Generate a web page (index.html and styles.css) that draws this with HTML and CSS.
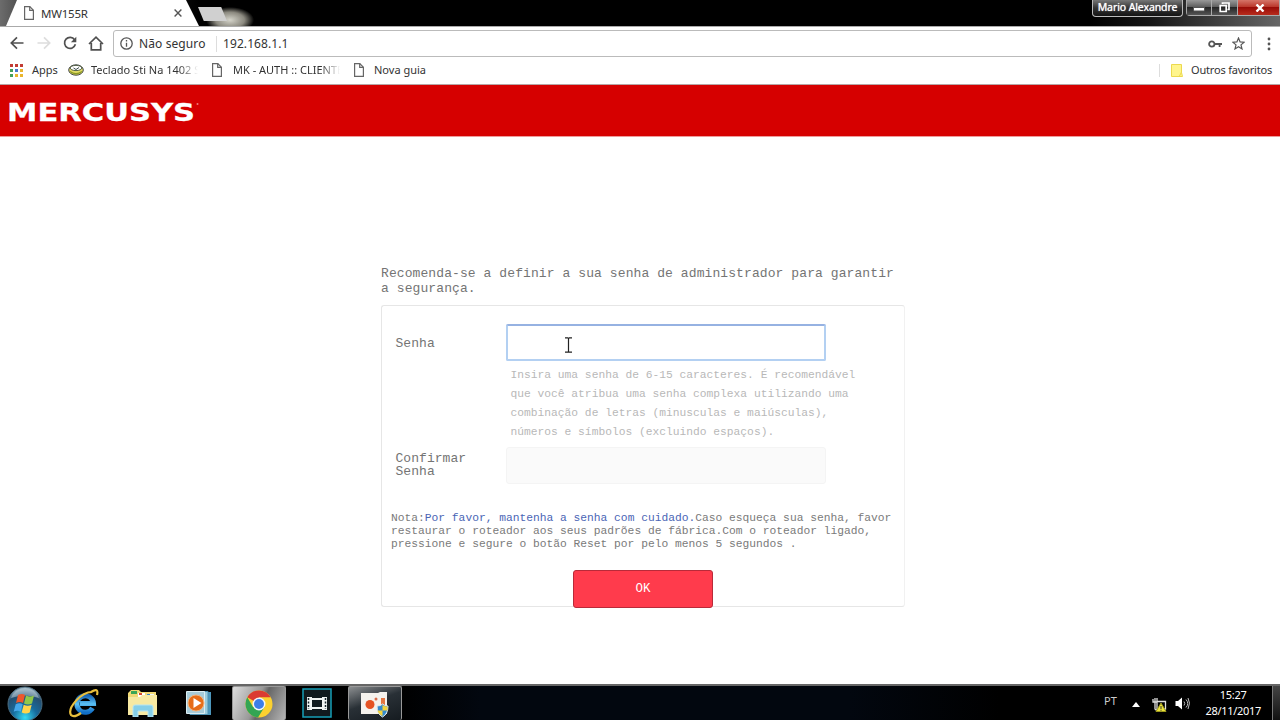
FILE: index.html
```html
<!DOCTYPE html>
<html lang="pt">
<head>
<meta charset="utf-8">
<title>MW155R</title>
<link rel="stylesheet" href="styles.css">
</head>
<body>
<div class="screen">
  <header class="titlebar">
    <div class="tab">
      <svg class="doc" width="10" height="14" viewBox="0 0 10 14"><path d="M.6.6h5.2l3.6 3.7v9H.6z"/><path d="M5.7.6v3.8h3.7"/></svg>
      <span class="tab-title">MW155R</span>
      <svg class="close" width="8" height="8" viewBox="0 0 8 8"><path d="M.6.6l6.8 6.8M7.4.6L.6 7.4"/></svg>
    </div>
    <div class="new-tab"><i></i></div>
    <div class="user">Mario Alexandre</div>
    <div class="window-buttons">
      <span class="wb min"><svg width="12" height="5" viewBox="0 0 12 5"><path d="M.5.5h11v3.5H.5z" fill="#fff" stroke="#555"/></svg></span>
      <span class="wb max"><svg width="11" height="11" viewBox="0 0 11 11"><path d="M3.5 2V1h6.5v6.5H8.5M1.2 3.5h6v6h-6z" fill="none" stroke="#fff" stroke-width="1.7"/></svg></span>
      <span class="wb exit"><svg width="10" height="8" viewBox="0 0 10 8"><path d="M1.5.5l7 7m0-7l-7 7" stroke="#fff" stroke-width="2.4"/></svg></span>
    </div>
  </header>

  <nav class="toolbar">
    <svg class="nav-icon back" width="14" height="14" viewBox="0 0 14 14"><path d="M13.5 7H1.5M7 1.3L1.3 7 7 12.7"/></svg>
    <svg class="nav-icon forward" width="14" height="14" viewBox="0 0 14 14"><path d="M.5 7h11.5M7 1.3L12.7 7 7 12.7"/></svg>
    <svg class="nav-icon reload" width="14" height="14" viewBox="0 0 14 14"><path d="M11.6 3.7A5.5 5.5 0 1 0 12.4 8.3"/><path d="M13.3.8v5.4H7.9z" fill="#505050" stroke="none"/></svg>
    <svg class="nav-icon home" width="16" height="15" viewBox="0 0 16 15"><path d="M1 8l7-6.8L15 8M3.3 7v6.8h9.4V7"/></svg>
    <div class="omnibox">
      <svg class="info" width="13" height="13" viewBox="0 0 13 13"><circle cx="6.5" cy="6.5" r="5.7"/><path d="M6.5 5.7v4M6.5 3v1.5"/></svg>
      <span class="secure">Não seguro</span>
      <span class="url">192.168.1.1</span>
      <svg class="key" width="14" height="8" viewBox="0 0 14 8"><circle cx="3.8" cy="4" r="2.7"/><path d="M6.5 4H14M11.6 4v3"/></svg>
      <svg class="star" width="13" height="13" viewBox="0 0 13 13"><path d="M6.5 1l1.6 3.9 4.1.3L9 7.9l1 4-3.5-2.2L3 11.9l1-4L.8 5.2l4.1-.3z"/></svg>
    </div>
    <svg class="menu" width="4" height="14" viewBox="0 0 4 14"><circle cx="2" cy="2" r="1.4"/><circle cx="2" cy="7" r="1.4"/><circle cx="2" cy="12" r="1.4"/></svg>
  </nav>

  <nav class="bookmarks">
    <svg class="apps" width="13" height="13" viewBox="0 0 13 13">
      <g fill="#c23b34"><path d="M0 0h3v3H0zM5 0h3v3H5zM10 0h3v3h-3z"/></g>
      <path d="M0 5h3v3H0z" fill="#43a05b"/><path d="M5 5h3v3H5z" fill="#4879ce"/><path d="M10 5h3v3h-3z" fill="#e9b52d"/>
      <path d="M0 10h3v3H0z" fill="#43a05b"/><path d="M5 10h3v3H5zM10 10h3v3h-3z" fill="#e9b52d"/>
    </svg>
    <span class="bm b-apps">Apps</span>
    <svg class="favicon" width="16" height="12" viewBox="0 0 16 12"><ellipse cx="8" cy="6" rx="7.3" ry="5.2" fill="#e3dc65" stroke="#42464b"/><ellipse cx="8" cy="4" rx="5.8" ry="2.6" fill="#fff" stroke="#55624d"/><path d="M2 7.5q6 4.500 12 0" fill="none" stroke="#8b9a24" stroke-width="1.3"/><path d="M5.500 4l2.500 1.500L11 3.500" fill="none" stroke="#3c4b4a"/></svg>
    <span class="bm fade b-tec">Teclado Sti Na 1402 S</span>
    <svg class="doc" width="10" height="14" viewBox="0 0 10 14"><path d="M.6.6h5.2l3.6 3.7v9H.6z"/><path d="M5.7.6v3.8h3.7"/></svg>
    <span class="bm fade b-mk">MK - AUTH :: CLIENTE</span>
    <svg class="doc" width="10" height="14" viewBox="0 0 10 14"><path d="M.6.6h5.2l3.6 3.7v9H.6z"/><path d="M5.7.6v3.8h3.7"/></svg>
    <span class="bm b-nova">Nova guia</span>
    <svg class="folder" width="12" height="13" viewBox="0 0 12 13"><path d="M.5.5h10v8l1 4H.5z" fill="#fff58d" stroke="#ecd94e"/><path d="M8.5 12l2-4" stroke="#ecd94e" fill="none"/></svg>
    <span class="bm b-outros">Outros favoritos</span>
  </nav>

  <div class="brand">
    <svg width="204" height="32" viewBox="0 0 204 32"><text class="logo" x="7" y="24.500" textLength="188" lengthAdjust="spacingAndGlyphs">MERCUSYS</text><circle cx="197.500" cy="8" r="1" fill="#f07a7a"/></svg>
  </div>

  <main class="page">
    <p class="intro">Recomenda-se a definir a sua senha de administrador para garantir<br>a segurança.</p>
    <form class="card">
      <div class="row">
        <label class="label first">Senha</label>
        <div class="field focused">
          <svg class="caret" width="9" height="16" viewBox="0 0 9 16"><path d="M1 .8h2.700l.8.700.8-.7H8M4.500 1.500v13M1 15.200h2.700l.8-.7.8.7H8"/></svg>
        </div>
      </div>
      <p class="hint">Insira uma senha de 6-15 caracteres. É recomendável<br>que você atribua uma senha complexa utilizando uma<br>combinação de letras (minusculas e maiúsculas),<br>números e símbolos (excluindo espaços).</p>
      <div class="row">
        <label class="label second">Confirmar<br>Senha</label>
        <div class="field"></div>
      </div>
      <p class="note">Nota:<span>Por favor, mantenha a senha com cuidado.</span>Caso esqueça sua senha, favor<br>restaurar o roteador aos seus padrões de fábrica.Com o roteador ligado,<br>pressione e segure o botão Reset por pelo menos 5 segundos .</p>
      <div class="ok">OK</div>
    </form>
  </main>

  <footer class="taskbar">
    <div class="task start">
      <svg width="36" height="35" viewBox="0 0 36 35">
        <defs><radialGradient id="orb" cx=".5" cy=".9" r=".9"><stop offset="0" stop-color="#35dcf4"/><stop offset=".4" stop-color="#176b9d"/><stop offset=".75" stop-color="#254f70"/><stop offset="1" stop-color="#a5bdc9"/></radialGradient></defs>
        <circle cx="18" cy="18" r="17" fill="url(#orb)" stroke="#4b6c80"/>
        <path d="M4 12Q7 3 18 2q11 1 14 10-14-5-28 0" fill="#d5e3e9" opacity=".45"/>
        <path d="M11 9q4-2 7 0l-2 8q-3-2-7 0z" fill="#ee572b"/><path d="M19 9.500q4 2 8 0l-2 8q-4 2-8 0z" fill="#91c849"/><path d="M8.700 18.200q4-2 7 0l-2 7.500q-3-2-7 0z" fill="#45a8ea"/><path d="M16.700 18.800q4 2 8 0l-2 7.800q-4 2-8 0z" fill="#ffd44a"/>
      </svg>
    </div>
    <div class="task ie">
      <svg width="32" height="30" viewBox="0 0 32 30">
        <defs><linearGradient id="ie" x2="0" y2="1"><stop stop-color="#1764b4"/><stop offset=".5" stop-color="#5bc1f4"/><stop offset="1" stop-color="#126fc6"/></linearGradient></defs>
        <path d="M24.500 20A8.300 8.300 0 1 1 25.500 15.500H12" fill="none" stroke="url(#ie)" stroke-width="5"/>
        <path d="M23 4Q31-1 29 7M24 4C13 4-1 20 3 27q3 3 10-2" fill="none" stroke="#e9bf3d" stroke-width="2.200"/>
      </svg>
    </div>
    <div class="task explorer">
      <svg width="31" height="28" viewBox="0 0 31 28">
        <path d="M1 26V4l3-3h8l2 2h15v23z" fill="#f0d976"/><path d="M4 2h6v3H4z" fill="#3aa657"/><path d="M11 4h7v4h-7z" fill="#fff"/><path d="M12 4h3v2h-3z" fill="#d5492f"/><path d="M20 5h7v3h-7z" fill="#eef5fb"/><path d="M20 5h3v1.500h-3z" fill="#3c84c6"/><path d="M1 8h12l2-2h15v20H1z" fill="#f7e9a2"/>
        <path d="M6 28V18q0-2 2-2h16q2 0 2 2v10h-5v-6H11v6z" fill="#86cfe9" stroke="#b8e6f4"/>
      </svg>
    </div>
    <div class="task media">
      <svg width="26" height="25" viewBox="0 0 26 25"><path d="M8 1h17v23H8z" fill="#4d97bc"/><path d="M4 .5h18v23H4z" fill="#9acbdc" stroke="#4e91b2"/><path d="M.5.5h18v22H.5z" fill="#a7cbd8" stroke="#dcedf2"/><circle cx="10" cy="12" r="8" fill="#e66d19" stroke="#f5b37c"/><path d="M7.500 7l8 5-8 5z" fill="#fff"/></svg>
    </div>
    <div class="task active chrome">
      <svg width="28" height="28" viewBox="0 0 28 28"><circle cx="14" cy="14" r="13.500" fill="#fbd12f"/><path d="M14 14L2.300 7.250A13.500 13.500 0 0 1 25.700 7.250H14z" fill="#db3b32"/><path d="M2.300 7.250A13.500 13.500 0 0 0 13 27.500L19.500 17H8z" fill="#33a553"/><circle cx="14" cy="14" r="6.500" fill="#f4f6f8"/><circle cx="14" cy="14" r="5" fill="#3c7ee8"/></svg>
    </div>
    <div class="task film">
      <svg width="30" height="30" viewBox="0 0 30 30"><path d="M1 1h28v28H1z" fill="#111a1e" stroke="#169fb7" stroke-width="1.500"/><path d="M5 9h5v13H5zM20 9h5v13h-5zM10 10h10v2H10zM10 19h10v2H10z" fill="#f0f3f2"/><path d="M6.500 10v11M23.500 10v11" stroke="#18272c" stroke-width="1.500" stroke-dasharray="2 1.500"/></svg>
    </div>
    <div class="task active recorder">
      <svg width="30" height="28" viewBox="0 0 30 28"><path d="M1 3h17l2-1h7v22H1z" fill="#f5f2ed"/><circle cx="10" cy="14.500" r="4.500" fill="#e55324"/><circle cx="16" cy="9" r="1.500" fill="#d76a49"/><path d="M21 8h4v8h-4z" fill="#e47742"/><path d="M17 16q4 0 5.500-2 2 2 5.500 2 0 8-5.500 11Q17 24 17 16" fill="#348bce" stroke="#e3edf1"/><path d="M22.500 15q2 1.500 5 1.500v4h-5zM17.500 20.500h5V26q-4-2-5-5.500" fill="#f5d43b"/></svg>
    </div>
    <span class="lang">PT</span>
    <svg class="arrow" width="8" height="5" viewBox="0 0 8 5"><path d="M4 0l4 5H0z" fill="#fff"/></svg>
    <svg class="network" width="15" height="16" viewBox="0 0 15 16"><path d="M5 4.500h8.500V12H5zM3 1v4M1 2v3h4V1M3 5v7q0 1 2 1" fill="none" stroke="#dedede" stroke-width="1.300"/><path d="M9 6l5 8.500H4z" fill="#ede43b" stroke="#9d981d"/><path d="M9 9v3M9 12.800v1" stroke="#333"/></svg>
    <svg class="sound" width="15" height="13" viewBox="0 0 15 13"><path d="M.5 4H3l4-3.500v12L3 9H.5z" fill="#fff"/><path d="M9 4.500q1.500 2 0 4M11 2.500q3.500 4 0 8M13 1q3 5 0 11" fill="none" stroke="#bbb"/></svg>
    <div class="clock"><span>15:27</span><span>28/11/2017</span></div>
    <div class="show-desktop"></div>
  </footer>
</div>
</body>
</html>
```
FILE: styles.css
```css
* { box-sizing: border-box; }
body { margin: 0; background: #fff; }
svg { display: block; flex: none; }
.screen { width: 1280px; height: 720px; overflow: hidden; display: flex; flex-direction: column; font-family: "Noto Sans", "Open Sans", sans-serif; color: #333; }
.titlebar { height: 27px; flex: none; display: flex; align-items: flex-start; background: linear-gradient(90deg, #6c6c6c 0, #505050 18px, #000 200px, #000 1090px, #151515 1150px, #666 1280px); border-bottom: 1px solid #aaa; }
.tab { width: 194px; height: 26px; margin-left: 6px; padding-left: 18px; display: flex; align-items: center; background: #fff; clip-path: polygon(11px 0, 180px 0, 193px 100%, 0 100%); }
.doc { fill: none; stroke: #666; stroke-width: 1.2; }
.tab-title { margin-left: 7px; width: 131px; font-size: 11.5px; letter-spacing: -.2px; }
.tab .close { stroke: #555; stroke-width: 1.4; margin-left: 2px; }
.new-tab { width: 60px; height: 26px; padding: 7px 0 0; background: radial-gradient(ellipse 24px 13px at 30px 20px, #d5d4ca, #8b897f 60%, transparent); }
.new-tab i { display: block; width: 29px; height: 14px; margin-left: -2px; background: #d0d0d0; clip-path: polygon(0 0, 80% 0, 100% 100%, 20% 100%); }
.user { margin-left: 832px; width: 91px; height: 17px; border: 1px solid #bbb; border-top: 0; border-radius: 0 0 4px 4px; background: linear-gradient(#777, #333 50%, #141414); color: #fff; font-size: 10.5px; letter-spacing: -.1px; line-height: 15px; text-align: center; white-space: nowrap; text-shadow: 0 0 1px #fff; }
.window-buttons { margin-left: 3px; width: 94px; height: 16px; display: flex; border: 1px solid #aaa; border-top: 0; border-radius: 0 0 0 4px; }
.wb { height: 15px; display: flex; align-items: center; justify-content: center; background: linear-gradient(#999, #5b5b5b 48%, #262626 50%, #555); }
.min { width: 26px; padding-top: 3px; border-right: 1px solid #aaa; }
.max { width: 26px; border-right: 1px solid #aaa; }
.exit { width: 42px; padding-left: 4px; background: linear-gradient(#d57468, #b93428 48%, #990c07 50%, #b72c1d); }
.toolbar { height: 32px; flex: none; display: flex; align-items: center; padding-left: 10px; }
.nav-icon { fill: none; stroke: #505050; stroke-width: 1.7; }
.toolbar .forward { margin-left: 13px; stroke: #ddd; }
.reload { margin-left: 12px; }
.home { margin-left: 11px; }
.omnibox { width: 1139px; height: 27px; margin: 1px 0 0 9px; padding-left: 6px; border: 1px solid #bbb; border-radius: 3px; display: flex; align-items: center; font-size: 12px; line-height: 16px; }
.info { fill: none; stroke: #555; stroke-width: 1.3; }
.secure { width: 78px; margin-left: 6px; border-right: 1px solid #ddd; letter-spacing: .1px; white-space: nowrap; }
.url { margin-left: 6px; letter-spacing: .08px; }
.key { margin-left: auto; fill: none; stroke: #555; stroke-width: 1.8; }
.star { margin: 0 6px 0 10px; fill: none; stroke: #555; stroke-width: 1.2; }
.menu { margin: 1px 0 0 15px; fill: #555; }
.bookmarks { height: 26px; flex: none; display: flex; align-items: center; padding-left: 10px; padding-bottom: 3px; border-bottom: 1px solid #b7a5a5; font-size: 11px; }
.bm { white-space: nowrap; line-height: 16px; }
.b-apps { margin-left: 9px; width: 28px; }
.favicon { margin-left: 8px; }
.b-tec { margin-left: 7px; width: 114px; }
.b-mk { margin-left: 11px; width: 114px; }
.b-tec + .doc { margin-left: 7px; }
.b-mk + .doc { margin-left: 7px; }
.b-nova { margin-left: 10px; }
.fade { -webkit-mask-image: linear-gradient(90deg, #000 88px, transparent 107px); mask-image: linear-gradient(90deg, #000 88px, transparent 107px); }
.folder { margin-left: auto; box-sizing: content-box; padding-left: 11px; border-left: 1px solid #ddd; }
.b-outros { width: 81px; margin: 0 8px 0 8px; letter-spacing: -.18px; }
.brand { height: 52px; flex: none; padding-top: 11px; background: #d60000; border-bottom: 1px solid #ef9a9a; }
.logo { font: bold 25.5px "DejaVu Sans", sans-serif; fill: #fff; stroke: #fff; stroke-width: .3px; }
.page { flex: 1; padding: 129px 0 0 381px; font-family: "Liberation Mono", "Courier New", monospace; color: #747474; }
.intro { margin: 0; height: 39px; font-size: 13px; letter-spacing: .09px; line-height: 15px; white-space: nowrap; }
.card { width: 524px; height: 302px; margin: 0; padding: 18px 0 0; border: 1px solid #e6e6e6; border-right-color: #f1f1f1; border-radius: 3px; }
.row { display: flex; }
.label { width: 124px; padding-left: 13.5px; font-size: 13px; line-height: 13px; letter-spacing: .05px; }
.first { padding-top: 13px; }
.second { padding-top: 5px; }
.field { width: 320px; height: 37px; background: #fafafa; border: 1px solid #f4f4f4; border-radius: 3px; }
.focused { height: 37px; padding: 11px 0 0 56px; background: #fff; border: 2px solid #b3d0f2; border-top-color: #96b2e2; border-radius: 2px; }
.caret { fill: none; stroke: #222; stroke-width: 1.2; }
.hint { height: 86px; margin: 0; padding: 5px 0 0 128.5px; color: #b8b8b8; font-size: 11.28px; line-height: 19px; white-space: nowrap; }
.note { height: 86px; margin: 0; padding: 28px 0 0 9px; color: #7a7a7a; font-size: 11.28px; line-height: 13px; white-space: nowrap; }
.note span { color: #4a65b5; }
.ok { width: 140px; height: 38px; margin-left: 191px; border: 1px solid #b92a39; border-radius: 3px; background: #ff3b4c; color: #fff; font-size: 12.5px; line-height: 37px; text-align: center; }
.taskbar { height: 36px; flex: none; display: flex; align-items: center; background: linear-gradient(90deg, #000 400px, #02070f 480px, #02070f 850px, #000 1000px); border-top: 2px solid #666; color: #fff; }
.task { height: 34px; flex: none; display: flex; align-items: center; justify-content: center; }
.start { width: 50px; }
.ie { width: 68px; }
.explorer { width: 48px; }
.media { width: 66px; }
.active { border: 1px solid #999; border-bottom: 0; border-radius: 2px; }
.chrome { width: 54px; background: linear-gradient(115deg, #ddd, #999 45%, #666 55%, #b5b5b5); }
.film { width: 62px; }
.recorder { width: 54px; background: linear-gradient(160deg, #8b8e90, #293036 45%, #151b20); }
.lang { margin-left: 702px; width: 22px; font-size: 11px; color: #ccc; line-height: 16px; padding-bottom: 4px; box-sizing: content-box; }
.arrow { margin: 2px 0 0 7px; }
.network { margin: 3px 0 0 12px; }
.sound { margin: 1px 0 0 8px; }
.clock { width: 80px; margin-left: 4px; display: flex; flex-direction: column; align-items: center; font-size: 11px; line-height: 16px; letter-spacing: -.3px; }
.show-desktop { margin-left: auto; width: 8px; height: 34px; flex: none; border-left: 1px solid #777; background: linear-gradient(#444, #111); }
```
